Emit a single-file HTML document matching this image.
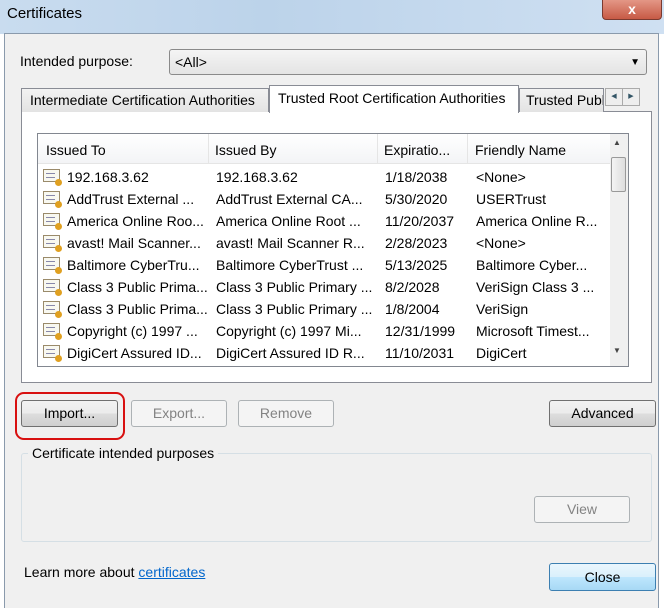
<!DOCTYPE html><html><head><style>
body{margin:0;width:664px;height:608px;overflow:hidden;background:#fff;font-family:"Liberation Sans",sans-serif;font-size:14px;color:#000;position:relative}
.a{position:absolute}
.btn{position:absolute;border:1px solid #707070;border-radius:3px;background:linear-gradient(#f2f2f2,#ebebeb 50%,#dddddd 51%,#cfcfcf);text-align:center;box-sizing:border-box;line-height:25px}
.dis{border-color:#adb2b5;background:#f4f4f4;color:#838383}
.row{position:absolute;left:40px;height:22px;line-height:22px;white-space:nowrap;width:570px}
.row span{position:absolute}
.ic{position:absolute;left:3px;top:3px;width:17px;height:13px;border:1px solid #9a8a6a;background:#f8f8f0;box-sizing:border-box}
.ic:after{content:"";position:absolute;right:-3px;bottom:-5px;width:7px;height:7px;border-radius:50%;background:#e0a020}
.ic:before{content:"";position:absolute;left:2px;top:3px;width:9px;height:3px;border-top:1px solid #88a;border-bottom:1px solid #88a}
</style></head><body>
<div class="a" style="left:0;top:0;width:664px;height:34px;background:linear-gradient(90deg,#c9dcef,#bcd3ea 40%,#cfe0f2)"></div>
<div class="a" style="left:7px;top:5px;font-size:15px">Certificates</div>
<div class="a" style="left:602px;top:-4px;width:58px;height:22px;border:1px solid #7a3a30;border-radius:4px;background:linear-gradient(#e8a090,#c75a45);color:#fff;text-align:center;font-weight:bold;line-height:24px">x</div>
<div class="a" style="left:4px;top:33px;width:655px;height:575px;background:#f0f0f0;border:1px solid #8a9aac;border-bottom:none;box-sizing:border-box"></div>
<div class="a" style="left:20px;top:53px">Intended purpose:</div>
<div class="a" style="left:169px;top:49px;width:478px;height:26px;border:1px solid #8a8a8a;border-radius:3px;background:linear-gradient(#f4f4f4,#e4e4e4);box-sizing:border-box"><span class="a" style="left:5px;top:4px">&lt;All&gt;</span><span class="a" style="right:6px;top:7px;font-size:10px">▼</span></div>
<div class="a" style="left:21px;top:111px;width:631px;height:272px;background:#fff;border:1px solid #898c95;box-sizing:border-box"></div>
<div class="a" style="left:21px;top:88px;width:248px;height:24px;border:1px solid #898c95;border-bottom:none;background:linear-gradient(#f2f2f2,#e3e3e3);box-sizing:border-box;padding:3px 0 0 8px">Intermediate Certification Authorities</div>
<div class="a" style="left:269px;top:85px;width:250px;height:28px;border:1px solid #898c95;border-bottom:none;background:#fff;box-sizing:border-box;padding:4px 0 0 8px">Trusted Root Certification Authorities</div>
<div class="a" style="left:519px;top:88px;width:85px;height:24px;border:1px solid #898c95;border-bottom:none;background:linear-gradient(#f2f2f2,#e3e3e3);box-sizing:border-box;padding:3px 0 0 6px;overflow:hidden;white-space:nowrap">Trusted Publ</div>
<div class="a" style="left:605px;top:88px;width:16px;height:16px;border:1px solid #aaa;background:#eee;font-size:7px;text-align:center;line-height:16px;color:#356">◀</div>
<div class="a" style="left:622px;top:88px;width:16px;height:16px;border:1px solid #aaa;background:#eee;font-size:7px;text-align:center;line-height:16px;color:#356">▶</div>
<div class="a" style="left:37px;top:133px;width:592px;height:234px;border:1px solid #828790;background:#fff;box-sizing:border-box;overflow:hidden">
<div class="a" style="left:0;top:0;width:572px;height:29px;background:linear-gradient(#fff,#f3f4f6);border-bottom:1px solid #e5e5e5"></div>
<div class="a" style="left:170px;top:0;width:1px;height:29px;background:#e5e5e5"></div>
<div class="a" style="left:339px;top:0;width:1px;height:29px;background:#e5e5e5"></div>
<div class="a" style="left:429px;top:0;width:1px;height:29px;background:#e5e5e5"></div>
<div class="a" style="left:8px;top:8px">Issued To</div><div class="a" style="left:177px;top:8px">Issued By</div><div class="a" style="left:346px;top:8px">Expiratio...</div><div class="a" style="left:437px;top:8px">Friendly Name</div>
<div class="a" style="left:572px;top:0;width:18px;height:232px;background:#f0f0f0"></div>
<div class="a" style="left:575px;top:4px;font-size:8px;color:#444">▲</div>
<div class="a" style="left:573px;top:23px;width:15px;height:35px;border:1px solid #999;border-radius:2px;background:linear-gradient(90deg,#f4f4f4,#ddd);box-sizing:border-box"></div>
<div class="a" style="left:575px;top:212px;font-size:8px;color:#444">▼</div>
</div>
<div class="row" style="top:166px"><div class="ic"></div><span style="left:27px">192.168.3.62</span><span style="left:176px">192.168.3.62</span><span style="left:345px">1/18/2038</span><span style="left:436px">&lt;None&gt;</span></div>
<div class="row" style="top:188px"><div class="ic"></div><span style="left:27px">AddTrust External ...</span><span style="left:176px">AddTrust External CA...</span><span style="left:345px">5/30/2020</span><span style="left:436px">USERTrust</span></div>
<div class="row" style="top:210px"><div class="ic"></div><span style="left:27px">America Online Roo...</span><span style="left:176px">America Online Root ...</span><span style="left:345px">11/20/2037</span><span style="left:436px">America Online R...</span></div>
<div class="row" style="top:232px"><div class="ic"></div><span style="left:27px">avast! Mail Scanner...</span><span style="left:176px">avast! Mail Scanner R...</span><span style="left:345px">2/28/2023</span><span style="left:436px">&lt;None&gt;</span></div>
<div class="row" style="top:254px"><div class="ic"></div><span style="left:27px">Baltimore CyberTru...</span><span style="left:176px">Baltimore CyberTrust ...</span><span style="left:345px">5/13/2025</span><span style="left:436px">Baltimore Cyber...</span></div>
<div class="row" style="top:276px"><div class="ic"></div><span style="left:27px">Class 3 Public Prima...</span><span style="left:176px">Class 3 Public Primary ...</span><span style="left:345px">8/2/2028</span><span style="left:436px">VeriSign Class 3 ...</span></div>
<div class="row" style="top:298px"><div class="ic"></div><span style="left:27px">Class 3 Public Prima...</span><span style="left:176px">Class 3 Public Primary ...</span><span style="left:345px">1/8/2004</span><span style="left:436px">VeriSign</span></div>
<div class="row" style="top:320px"><div class="ic"></div><span style="left:27px">Copyright (c) 1997 ...</span><span style="left:176px">Copyright (c) 1997 Mi...</span><span style="left:345px">12/31/1999</span><span style="left:436px">Microsoft Timest...</span></div>
<div class="row" style="top:342px"><div class="ic"></div><span style="left:27px">DigiCert Assured ID...</span><span style="left:176px">DigiCert Assured ID R...</span><span style="left:345px">11/10/2031</span><span style="left:436px">DigiCert</span></div>
<div class="btn" style="left:21px;top:400px;width:97px;height:27px">Import...</div>
<div class="btn dis" style="left:131px;top:400px;width:96px;height:27px">Export...</div>
<div class="btn dis" style="left:238px;top:400px;width:96px;height:27px">Remove</div>
<div class="btn" style="left:549px;top:400px;width:107px;height:27px">Advanced</div>
<div class="a" style="left:15px;top:392px;width:110px;height:48px;border:2px solid #d81010;border-radius:9px;box-sizing:border-box"></div>
<div class="a" style="left:21px;top:453px;width:631px;height:89px;border:1px solid #d5dfe5;border-radius:3px;box-sizing:border-box"></div>
<div class="a" style="left:28px;top:445px;background:#f0f0f0;padding:0 4px">Certificate intended purposes</div>
<div class="btn dis" style="left:534px;top:496px;width:96px;height:27px">View</div>
<div class="a" style="left:24px;top:564px">Learn more about <span style="color:#0066cc;text-decoration:underline">certificates</span></div>
<div class="btn" style="left:549px;top:563px;width:107px;height:28px;border-color:#3c7fb1;background:linear-gradient(#eaf6fd,#d9f0fc 50%,#bee6fd 51%,#a7d9f5);line-height:26px">Close</div>
</body></html>
